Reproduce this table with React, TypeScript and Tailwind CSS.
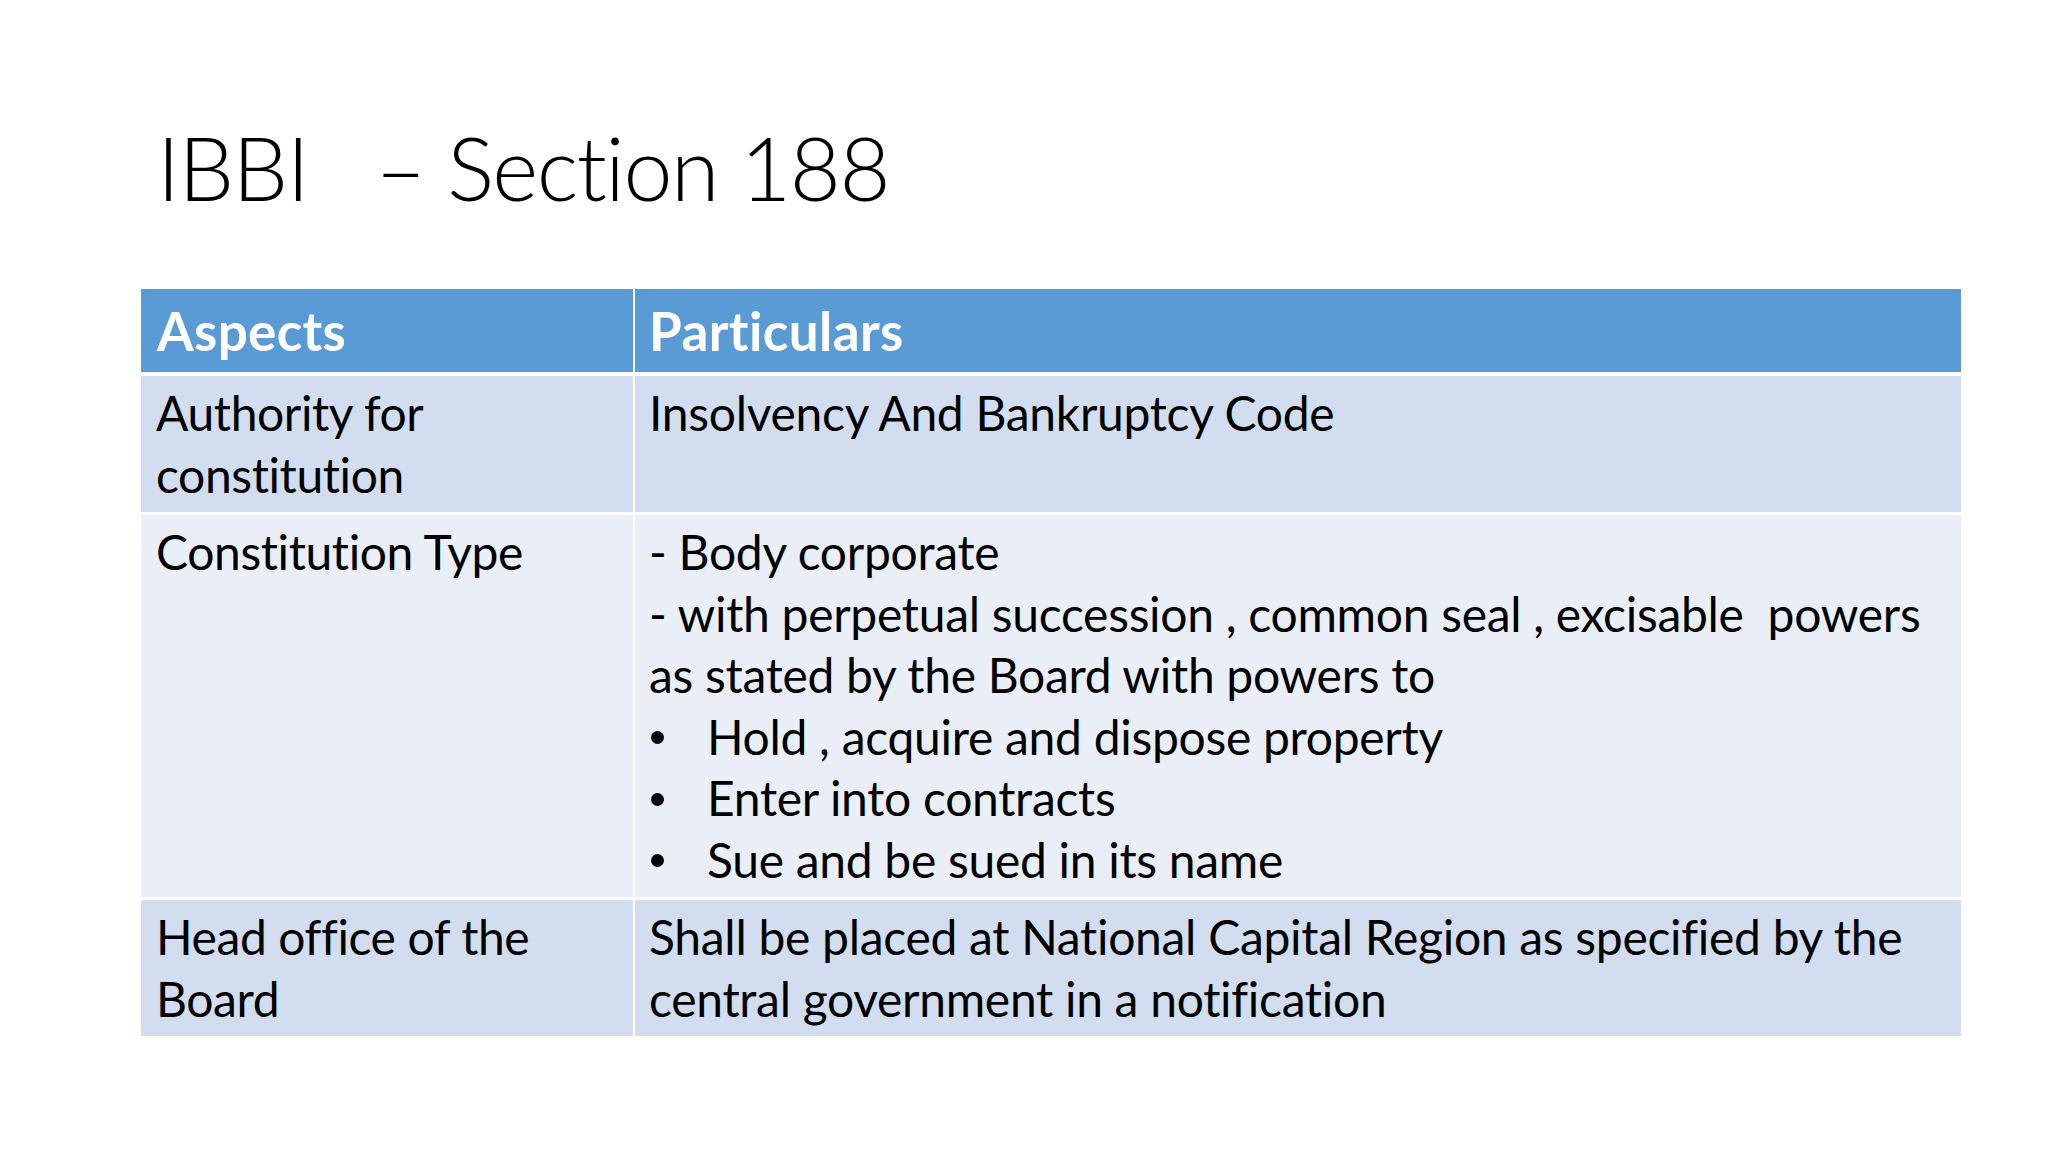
import React from 'react';

type Row = {
  aspect: string[];
  lines: { text: string; bullet?: boolean }[];
  tone: 'dark' | 'light';
};

const rows: Row[] = [
  {
    aspect: ['Authority for', 'constitution'],
    lines: [{ text: 'Insolvency And Bankruptcy Code' }],
    tone: 'dark',
  },
  {
    aspect: ['Constitution Type'],
    lines: [
      { text: '- Body corporate' },
      { text: '- with perpetual succession , common seal , excisable  powers' },
      { text: 'as stated by the Board with powers to' },
      { text: 'Hold , acquire and dispose property', bullet: true },
      { text: 'Enter into contracts', bullet: true },
      { text: 'Sue and be sued in its name', bullet: true },
    ],
    tone: 'light',
  },
  {
    aspect: ['Head office of the', 'Board'],
    lines: [
      { text: 'Shall be placed at National Capital Region as specified by the' },
      { text: 'central government in a notification' },
    ],
    tone: 'dark',
  },
];

const App: React.FC = () => {
  return (
    <div className="w-[2048px] h-[1152px] bg-white text-black font-['Lato','Liberation_Sans',sans-serif] overflow-hidden">
      {/* Title */}
      <h1 className="pl-[157px] pt-[113px] text-[88px] leading-[108px] font-light whitespace-pre tracking-[-1.5px]">
        IBBI   – Section 188
      </h1>

      {/* Table */}
      <div className="ml-[141px] mt-[68px] w-[1820px] flex flex-col">
        <div className="grid grid-cols-[492px_1fr] gap-x-[2px] bg-white pb-[4px]">
          <div className="bg-[#5b9bd5] h-[83px] px-[16px] pt-[11px] text-[53px] leading-[61px] font-bold text-white tracking-[0.3px]">
            Aspects
          </div>
          <div className="bg-[#5b9bd5] h-[83px] px-[14px] pt-[11px] text-[53px] leading-[61px] font-bold text-white tracking-[0.4px]">
            Particulars
          </div>
        </div>

        <div className="flex flex-col gap-y-[3px]">
          {rows.map((row, i) => {
            const bg = row.tone === 'dark' ? 'bg-[#d2deef]' : 'bg-[#eaeff7]';
            return (
              <div key={i} className="grid grid-cols-[492px_1fr] gap-x-[2px]">
                <div className={`${bg} px-[15px] pt-[6px] pb-[7px] text-[48px] leading-[61.5px] tracking-[-0.4px]`}>
                  {row.aspect.map((a, j) => (
                    <div key={j}>{a}</div>
                  ))}
                </div>
                <div className={`${bg} px-[14px] pt-[6px] pb-[7px] text-[48px] leading-[61.5px] tracking-[-0.3px]`}>
                  {row.lines.map((l, j) =>
                    l.bullet ? (
                      <div key={j} className="flex items-center">
                        <span className="w-[58px] shrink-0 pl-[2px] pt-[3px]">
                          <span className="block w-[13px] h-[13px] rounded-full bg-black" />
                        </span>
                        <span>{l.text}</span>
                      </div>
                    ) : (
                      <div key={j} className="whitespace-pre">{l.text}</div>
                    )
                  )}
                </div>
              </div>
            );
          })}
        </div>
      </div>
    </div>
  );
};

export default App;
